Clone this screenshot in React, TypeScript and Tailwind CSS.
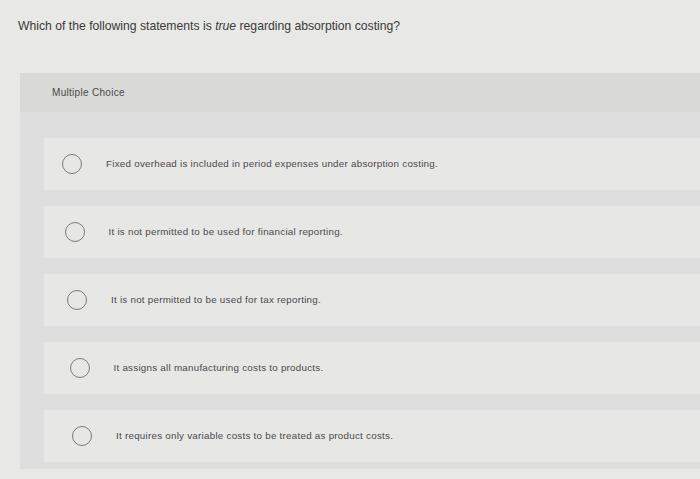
const options = [
  'Fixed overhead is included in period expenses under absorption costing.',
  'It is not permitted to be used for financial reporting.',
  'It is not permitted to be used for tax reporting.',
  'It assigns all manufacturing costs to products.',
  'It requires only variable costs to be treated as product costs.',
];

export default function App() {
  return (
    <div className="w-[700px] h-[479px] overflow-hidden bg-[#e8e8e6] font-['Liberation_Sans',Arial,sans-serif]">
      <div className="h-[73px] pl-[18px] pt-[18px]">
        <p className="text-[12.2px] leading-[16px] text-[#3a3a3a]">
          Which of the following statements is <em>true</em> regarding absorption costing?
        </p>
      </div>

      <div className="ml-[20px] bg-[#dedede]">
        <div className="h-[39px] flex items-center pl-[32px] bg-[#d9d9d8]">
          <span className="text-[10px] tracking-[0.3px] text-[#4a4a4a]">Multiple Choice</span>
        </div>
        <div className="flex flex-col gap-[16px] pt-[26px] pb-[7px] pl-[24px]">
          {options.map((text, i) => (
            <div key={i} className="h-[52px] flex items-center bg-[#e7e7e6]">
              <div
                className="flex items-center"
                style={{ paddingLeft: 18 + i * 2.5 }}
              >
                <span className="w-[20px] h-[20px] rounded-full border-[1.5px] border-[#7a7a7a] shrink-0" />
                <span className="ml-[24px] text-[9.8px] tracking-[0.25px] text-[#4a4a4a]">{text}</span>
              </div>
            </div>
          ))}
        </div>
      </div>
    </div>
  );
}
